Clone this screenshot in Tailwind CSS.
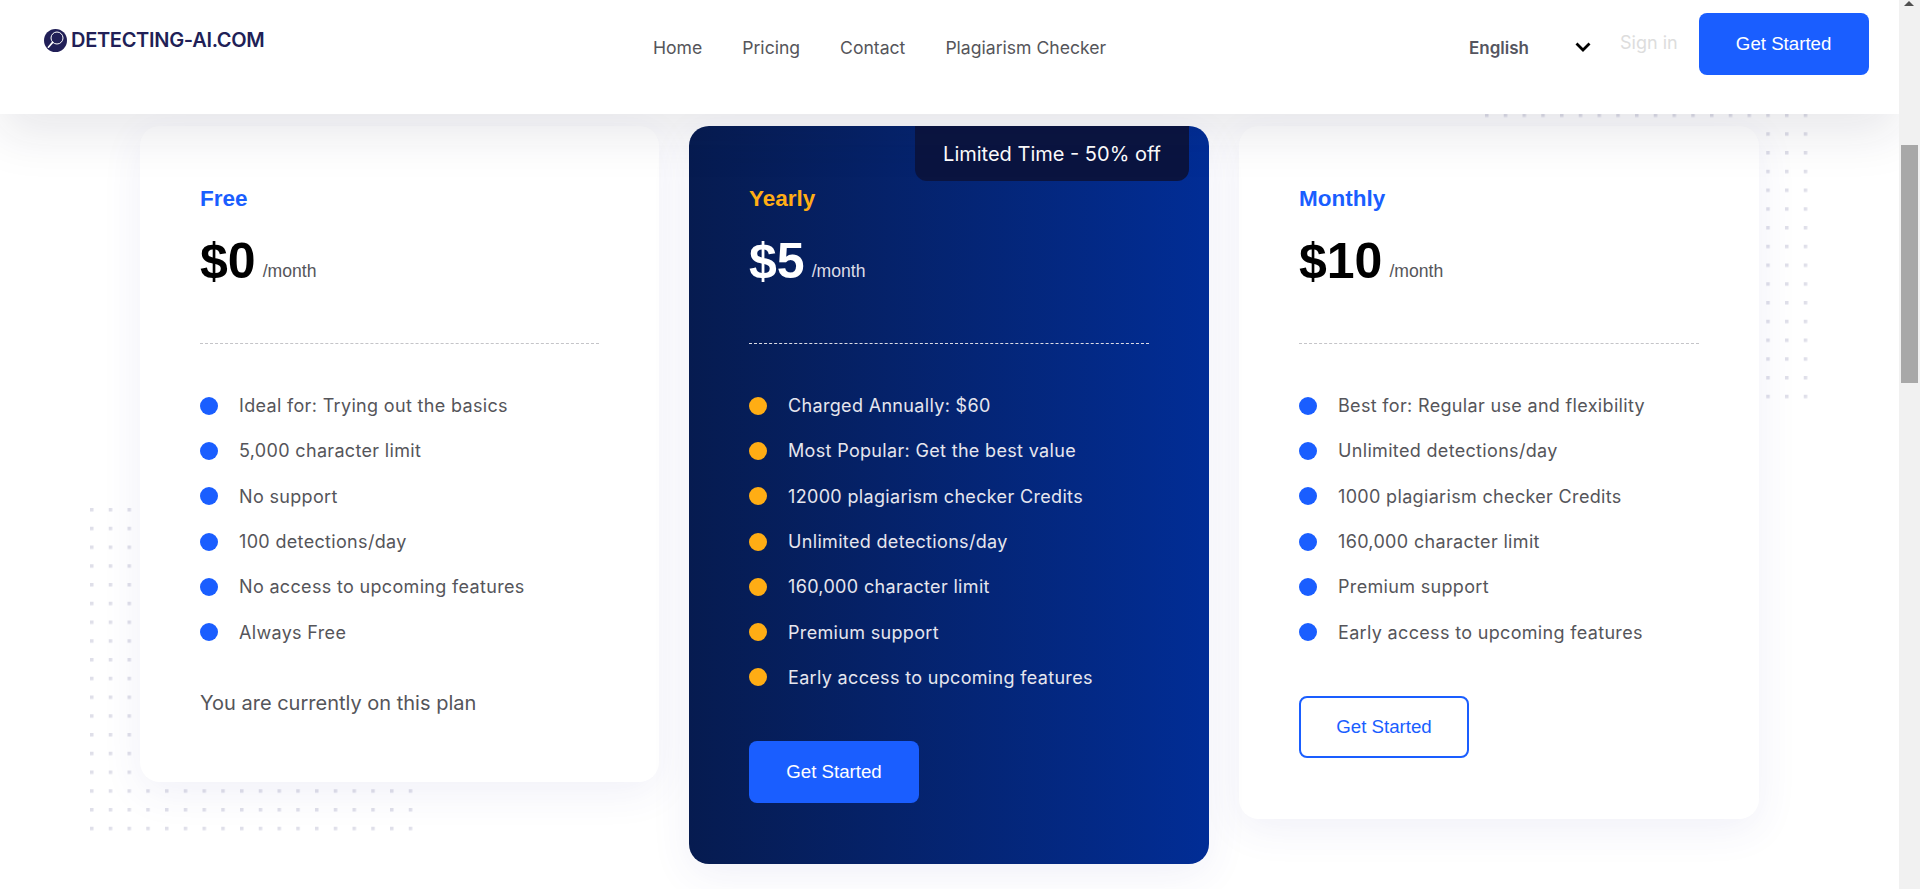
<!DOCTYPE html>
<html lang="en">
<head>
  <meta charset="UTF-8">
  <meta name="viewport" content="width=device-width, initial-scale=1">
  <title>Pricing - Detecting-AI.com</title>
  <script src="https://cdn.jsdelivr.net/npm/@tailwindcss/browser@4"></script>
</head>
<body class="bg-white h-screen overflow-hidden flex font-['Inter',sans-serif]">

  <div class="relative flex-1 min-w-0 h-full overflow-hidden">

    <!-- dotted background decoration -->
    <svg class="absolute left-[90px] top-[508px]" width="323" height="323">
      <defs>
        <pattern id="dots" width="18.75" height="18.75" patternUnits="userSpaceOnUse">
          <rect width="3.5" height="3.5" fill="#dfdfe9"></rect>
        </pattern>
      </defs>
      <rect width="323" height="323" fill="url(#dots)"></rect>
    </svg>
    <svg class="absolute left-[1485px] top-[76px]" width="323" height="323">
      <rect width="323" height="323" fill="url(#dots)"></rect>
    </svg>

    <!-- header -->
    <header class="relative z-10 h-[114px] bg-white shadow-[0_20px_50px_rgba(30,30,60,0.1)]">
      <div class="absolute left-[44px] top-[28px] flex items-center gap-[4px]">
        <svg width="23" height="23" viewBox="0 0 23 23">
          <circle cx="11.5" cy="11.5" r="11.5" fill="#211f57"></circle>
          <circle cx="13" cy="9" r="6" fill="none" stroke="#fff" stroke-width="1"></circle>
          <path d="M8.6 13.4 L4.4 18.2" stroke="#fff" stroke-width="1.6" stroke-linecap="round"></path>
        </svg>
        <span class="mt-[1px] text-[20px] leading-[23px] font-semibold text-[#211f57] tracking-[-0.3px]">DETECTING-AI.COM</span>
      </div>

      <nav class="absolute left-[653px] top-[36px] flex gap-[40px] text-[17.58px] leading-[24px] text-[#55555a]">
        <a href="#">Home</a>
        <a href="#">Pricing</a>
        <a href="#">Contact</a>
        <a href="#">Plagiarism Checker</a>
      </nav>

      <div class="absolute left-[1469px] top-[13px] flex items-start">
        <span class="mt-[23px] w-[106px] text-[17px] leading-[24px] font-semibold text-[#55555f]">English</span>
        <svg class="mt-[29px]" width="16" height="10" viewBox="0 0 16 10">
          <path d="M1.5 1.5 L8 8 L14.5 1.5" fill="none" stroke="#000" stroke-width="2.8"></path>
        </svg>
        <a href="#" class="ml-[29px] mt-[18px] text-[18px] leading-[24px] text-[#dddddd]">Sign in</a>
        <a href="#" class="ml-[21px] w-[170px] h-[62px] rounded-lg bg-[#1a5eff] text-white text-[18.7px] font-['Liberation_Sans',sans-serif] flex items-center justify-center">Get Started</a>
      </div>
    </header>

    <!-- pricing cards -->
    <main class="relative flex justify-center items-start gap-[30px] pt-[12px]">

      <div class="w-[519px] shrink-0 bg-white rounded-[20px] px-[60px] pt-[60px] pb-[65px] shadow-[0_10px_40px_rgba(60,60,160,0.08)]">
        <h3 class="text-[22.5px] leading-[26px] font-bold text-[#1a5eff] font-['Liberation_Sans',sans-serif]">Free</h3>
        <div class="mt-[16px] h-[64px] flex items-center gap-[7px] font-['Liberation_Sans',sans-serif]">
          <span class="mt-[1px] text-[50px] leading-[64px] font-bold text-black">$0</span>
          <span class="mt-[22px] text-[17.6px] text-[#55555a]">/month</span>
        </div>
        <div class="mt-[51px] border-t border-dashed border-[#c4c4c8]"></div>
        <ul class="mt-[39px] text-[18px] tracking-[0.33px] text-[#55555a]">
          <li class="h-[45.3px] flex items-center gap-[21px]"><span class="w-[18px] h-[18px] rounded-full bg-[#1a5eff]"></span>Ideal for: Trying out the basics</li>
          <li class="h-[45.3px] flex items-center gap-[21px]"><span class="w-[18px] h-[18px] rounded-full bg-[#1a5eff]"></span>5,000 character limit</li>
          <li class="h-[45.3px] flex items-center gap-[21px]"><span class="w-[18px] h-[18px] rounded-full bg-[#1a5eff]"></span>No support</li>
          <li class="h-[45.3px] flex items-center gap-[21px]"><span class="w-[18px] h-[18px] rounded-full bg-[#1a5eff]"></span>100 detections/day</li>
          <li class="h-[45.3px] flex items-center gap-[21px]"><span class="w-[18px] h-[18px] rounded-full bg-[#1a5eff]"></span>No access to upcoming features</li>
          <li class="h-[45.3px] flex items-center gap-[21px]"><span class="w-[18px] h-[18px] rounded-full bg-[#1a5eff]"></span>Always Free</li>
        </ul>
        <p class="mt-[35px] text-[20px] leading-[27px] text-[#55555a]">You are currently on this plan</p>
      </div>

      <div class="relative w-[520px] shrink-0 rounded-[20px] px-[60px] pt-[60px] pb-[61px] bg-linear-to-r from-[#061b50] to-[#012d96] shadow-[0_10px_40px_rgba(60,60,160,0.08)]">
        <div class="absolute right-[20px] top-0 w-[274px] h-[55px] rounded-b-xl bg-[#0a1440] text-white text-[20px] flex items-center justify-center">Limited Time - 50% off</div>
        <h3 class="text-[22.5px] leading-[26px] font-bold text-[#ffad14] font-['Liberation_Sans',sans-serif]">Yearly</h3>
        <div class="mt-[16px] h-[64px] flex items-center gap-[7px] font-['Liberation_Sans',sans-serif]">
          <span class="mt-[1px] text-[50px] leading-[64px] font-bold text-white">$5</span>
          <span class="mt-[22px] text-[17.6px] text-[#dcdce6]">/month</span>
        </div>
        <div class="mt-[51px] border-t border-dashed border-[#dcdce6]"></div>
        <ul class="mt-[39px] text-[18px] tracking-[0.33px] text-[#e6e6ee]">
          <li class="h-[45.3px] flex items-center gap-[21px]"><span class="w-[18px] h-[18px] rounded-full bg-[#ffad14]"></span>Charged Annually: $60</li>
          <li class="h-[45.3px] flex items-center gap-[21px]"><span class="w-[18px] h-[18px] rounded-full bg-[#ffad14]"></span>Most Popular: Get the best value</li>
          <li class="h-[45.3px] flex items-center gap-[21px]"><span class="w-[18px] h-[18px] rounded-full bg-[#ffad14]"></span>12000 plagiarism checker Credits</li>
          <li class="h-[45.3px] flex items-center gap-[21px]"><span class="w-[18px] h-[18px] rounded-full bg-[#ffad14]"></span>Unlimited detections/day</li>
          <li class="h-[45.3px] flex items-center gap-[21px]"><span class="w-[18px] h-[18px] rounded-full bg-[#ffad14]"></span>160,000 character limit</li>
          <li class="h-[45.3px] flex items-center gap-[21px]"><span class="w-[18px] h-[18px] rounded-full bg-[#ffad14]"></span>Premium support</li>
          <li class="h-[45.3px] flex items-center gap-[21px]"><span class="w-[18px] h-[18px] rounded-full bg-[#ffad14]"></span>Early access to upcoming features</li>
        </ul>
        <a href="#" class="mt-[41px] w-[170px] h-[62px] rounded-lg bg-[#1a5eff] text-white text-[18.7px] font-['Liberation_Sans',sans-serif] flex items-center justify-center">Get Started</a>
      </div>

      <div class="w-[520px] shrink-0 bg-white rounded-[20px] px-[60px] pt-[60px] pb-[61px] shadow-[0_10px_40px_rgba(60,60,160,0.08)]">
        <h3 class="text-[22.5px] leading-[26px] font-bold text-[#1a5eff] font-['Liberation_Sans',sans-serif]">Monthly</h3>
        <div class="mt-[16px] h-[64px] flex items-center gap-[7px] font-['Liberation_Sans',sans-serif]">
          <span class="mt-[1px] text-[50px] leading-[64px] font-bold text-black">$10</span>
          <span class="mt-[22px] text-[17.6px] text-[#55555a]">/month</span>
        </div>
        <div class="mt-[51px] border-t border-dashed border-[#c4c4c8]"></div>
        <ul class="mt-[39px] text-[18px] tracking-[0.33px] text-[#55555a]">
          <li class="h-[45.3px] flex items-center gap-[21px]"><span class="w-[18px] h-[18px] rounded-full bg-[#1a5eff]"></span>Best for: Regular use and flexibility</li>
          <li class="h-[45.3px] flex items-center gap-[21px]"><span class="w-[18px] h-[18px] rounded-full bg-[#1a5eff]"></span>Unlimited detections/day</li>
          <li class="h-[45.3px] flex items-center gap-[21px]"><span class="w-[18px] h-[18px] rounded-full bg-[#1a5eff]"></span>1000 plagiarism checker Credits</li>
          <li class="h-[45.3px] flex items-center gap-[21px]"><span class="w-[18px] h-[18px] rounded-full bg-[#1a5eff]"></span>160,000 character limit</li>
          <li class="h-[45.3px] flex items-center gap-[21px]"><span class="w-[18px] h-[18px] rounded-full bg-[#1a5eff]"></span>Premium support</li>
          <li class="h-[45.3px] flex items-center gap-[21px]"><span class="w-[18px] h-[18px] rounded-full bg-[#1a5eff]"></span>Early access to upcoming features</li>
        </ul>
        <a href="#" class="mt-[41px] w-[170px] h-[62px] rounded-lg border-2 border-[#1a5eff] text-[#1a5eff] text-[18.7px] font-['Liberation_Sans',sans-serif] flex items-center justify-center">Get Started</a>
      </div>

    </main>
  </div>

  <!-- browser scrollbar -->
  <div class="relative w-[21px] shrink-0 h-full bg-[#f1f1f1]">
    <div class="absolute left-[5px] top-[1px] w-0 h-0 border-x-[5px] border-x-transparent border-b-[5px] border-b-[#505050]"></div>
    <div class="absolute left-[2px] right-[2px] top-[145px] h-[238px] bg-[#a8a8a8]"></div>
  </div>

</body>
</html>
